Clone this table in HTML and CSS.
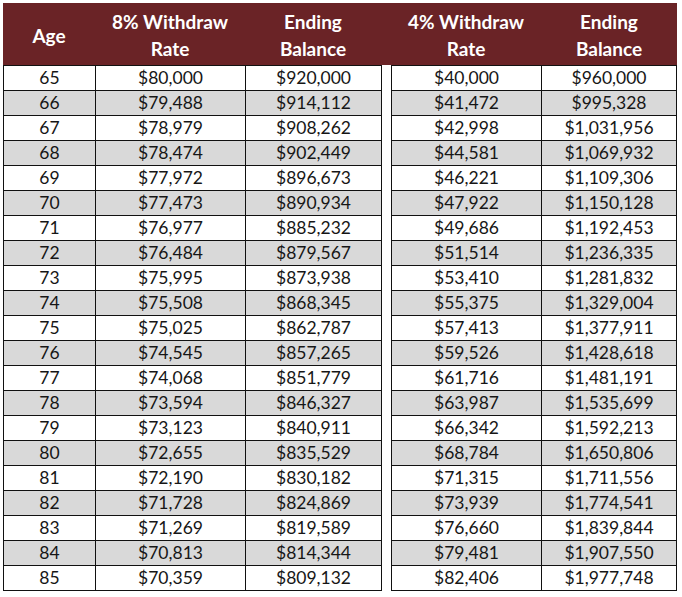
FILE: index.html
```html
<!DOCTYPE html>
<html>
<head>
<meta charset="utf-8">
<link rel="stylesheet" href="styles.css">
</head>
<body>
<div class="sheet">
  <div class="head">
    <div class="h c1">Age</div>
    <div class="h c2">8% Withdraw<br>Rate</div>
    <div class="h c3">Ending<br>Balance</div>
    <div class="h c5">4% Withdraw<br>Rate</div>
    <div class="h c6">Ending<br>Balance</div>
  </div>
  <div class="body">
    <table class="t tl">
      <colgroup><col class="w-age"><col class="w-rate"><col class="w-bal"></colgroup>
      <tbody>
        <tr><td>65</td><td>$80,000</td><td>$920,000</td></tr>
        <tr class="g"><td>66</td><td>$79,488</td><td>$914,112</td></tr>
        <tr><td>67</td><td>$78,979</td><td>$908,262</td></tr>
        <tr class="g"><td>68</td><td>$78,474</td><td>$902,449</td></tr>
        <tr><td>69</td><td>$77,972</td><td>$896,673</td></tr>
        <tr class="g"><td>70</td><td>$77,473</td><td>$890,934</td></tr>
        <tr><td>71</td><td>$76,977</td><td>$885,232</td></tr>
        <tr class="g"><td>72</td><td>$76,484</td><td>$879,567</td></tr>
        <tr><td>73</td><td>$75,995</td><td>$873,938</td></tr>
        <tr class="g"><td>74</td><td>$75,508</td><td>$868,345</td></tr>
        <tr><td>75</td><td>$75,025</td><td>$862,787</td></tr>
        <tr class="g"><td>76</td><td>$74,545</td><td>$857,265</td></tr>
        <tr><td>77</td><td>$74,068</td><td>$851,779</td></tr>
        <tr class="g"><td>78</td><td>$73,594</td><td>$846,327</td></tr>
        <tr><td>79</td><td>$73,123</td><td>$840,911</td></tr>
        <tr class="g"><td>80</td><td>$72,655</td><td>$835,529</td></tr>
        <tr><td>81</td><td>$72,190</td><td>$830,182</td></tr>
        <tr class="g"><td>82</td><td>$71,728</td><td>$824,869</td></tr>
        <tr><td>83</td><td>$71,269</td><td>$819,589</td></tr>
        <tr class="g"><td>84</td><td>$70,813</td><td>$814,344</td></tr>
        <tr><td>85</td><td>$70,359</td><td>$809,132</td></tr>
      </tbody>
    </table>
    <table class="t tr">
      <colgroup><col class="w-rate"><col class="w-bal2"></colgroup>
      <tbody>
        <tr><td>$40,000</td><td>$960,000</td></tr>
        <tr class="g"><td>$41,472</td><td>$995,328</td></tr>
        <tr><td>$42,998</td><td>$1,031,956</td></tr>
        <tr class="g"><td>$44,581</td><td>$1,069,932</td></tr>
        <tr><td>$46,221</td><td>$1,109,306</td></tr>
        <tr class="g"><td>$47,922</td><td>$1,150,128</td></tr>
        <tr><td>$49,686</td><td>$1,192,453</td></tr>
        <tr class="g"><td>$51,514</td><td>$1,236,335</td></tr>
        <tr><td>$53,410</td><td>$1,281,832</td></tr>
        <tr class="g"><td>$55,375</td><td>$1,329,004</td></tr>
        <tr><td>$57,413</td><td>$1,377,911</td></tr>
        <tr class="g"><td>$59,526</td><td>$1,428,618</td></tr>
        <tr><td>$61,716</td><td>$1,481,191</td></tr>
        <tr class="g"><td>$63,987</td><td>$1,535,699</td></tr>
        <tr><td>$66,342</td><td>$1,592,213</td></tr>
        <tr class="g"><td>$68,784</td><td>$1,650,806</td></tr>
        <tr><td>$71,315</td><td>$1,711,556</td></tr>
        <tr class="g"><td>$73,939</td><td>$1,774,541</td></tr>
        <tr><td>$76,660</td><td>$1,839,844</td></tr>
        <tr class="g"><td>$79,481</td><td>$1,907,550</td></tr>
        <tr><td>$82,406</td><td>$1,977,748</td></tr>
      </tbody>
    </table>
  </div>
</div>
</body>
</html>
```
FILE: styles.css
```css
html, body {
  margin: 0;
  padding: 0;
  background: #ffffff;
}
.sheet {
  padding: 3px 0 0 3px;
  width: 674px;
  font-family: "Lato", "Open Sans", sans-serif;
  color: #161616;
}
.head {
  display: grid;
  grid-template-columns: 92px 150px 136px 10px 150px 136px;
  height: 62px;
  background: #6a2326;
  color: #ffffff;
  font-weight: bold;
  font-size: 19px;
  line-height: 27px;
}
.h {
  display: flex;
  align-items: center;
  justify-content: center;
  text-align: center;
  padding-top: 2px;
}
.c5 { grid-column: 5; }
.c6 { grid-column: 6; }
.body {
  display: flex;
  gap: 9px;
  align-items: flex-start;
}
.t {
  border-collapse: collapse;
  table-layout: fixed;
  font-size: 17.5px;
}
.tl { width: 379px; }
.tr { width: 286px; }
.w-age { width: 92px; }
.w-rate { width: 150px; }
.w-bal { width: 136px; }
.w-bal2 { width: 135px; }
.t td {
  border: 1px solid #111111;
  padding: 0;
  height: 24px;
  line-height: 24px;
  text-align: center;
}
.t tr.g td {
  background: #d9d9d9;
}
```
